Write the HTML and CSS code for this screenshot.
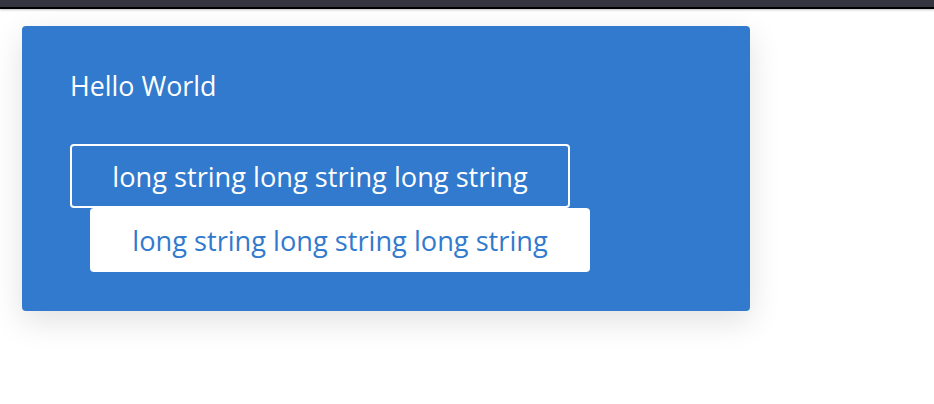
FILE: index.html
```html
<!DOCTYPE html>
<html>
<head>
<meta charset="utf-8">
<link rel="stylesheet" href="styles.css">
</head>
<body>
<div class="topbar"></div>
<main class="page">
  <section class="card">
    <p class="title">Hello World</p>
    <div class="buttons">
      <button class="btn btn-outline">long string long string long string</button>
      <button class="btn btn-solid">long string long string long string</button>
    </div>
  </section>
</main>
</body>
</html>
```
FILE: styles.css
```css
html, body {
  margin: 0;
  padding: 0;
  background: #fff;
  font-family: "Open Sans", "Noto Sans", sans-serif;
}
body {
  min-height: 100vh;
}
.topbar {
  height: 7px;
  background: #33353f;
  border-bottom: 2px solid #000;
  box-shadow: 0 1px 2px rgba(0,0,0,0.25);
}
.page {
  padding: 17px 22px;
}
.card {
  box-sizing: border-box;
  width: 728px;
  height: 285px;
  background: #317acd;
  border-radius: 4px;
  box-shadow: 0 10px 32px rgba(0,0,0,0.12);
  padding: 43px 48px;
  color: #fff;
}
.title {
  margin: 0;
  font-size: 26.8px;
  line-height: 34px;
}
.buttons {
  display: flex;
  flex-direction: column;
  align-items: flex-start;
  margin-top: 41px;
}
.btn {
  box-sizing: border-box;
  width: 500px;
  height: 64px;
  border-radius: 4px;
  font-family: inherit;
  font-size: 27.2px;
  padding: 0;
  cursor: pointer;
}
.btn-outline {
  background: transparent;
  color: #fff;
  border: 2px solid #fff;
}
.btn-solid {
  background: #fff;
  color: #317acd;
  border: 0;
  margin-left: 20px;
}
```
